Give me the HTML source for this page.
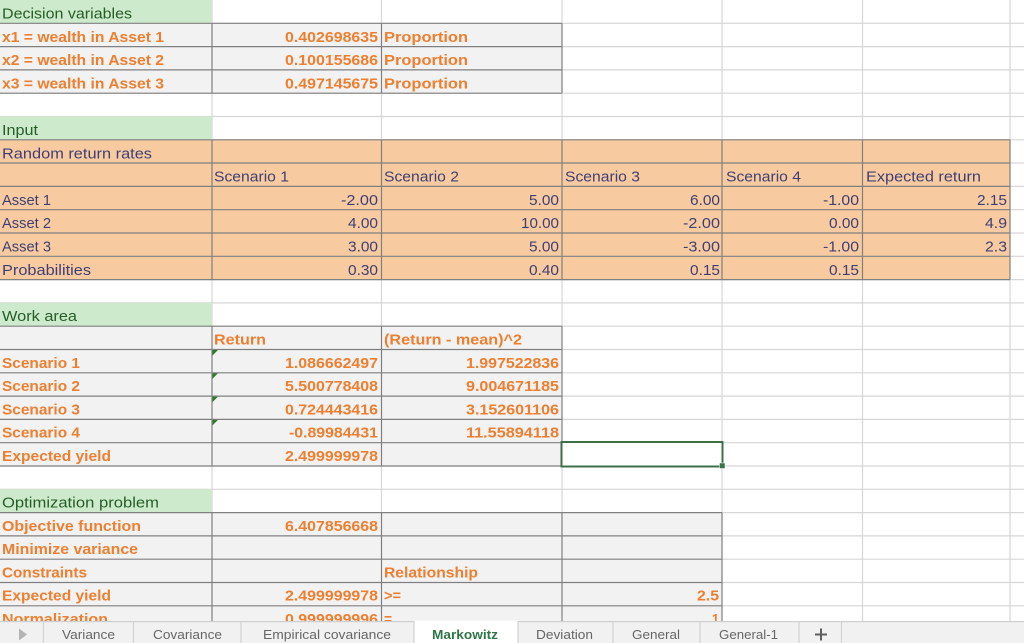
<!DOCTYPE html>
<html><head><meta charset="utf-8"><style>
html,body{margin:0;padding:0;background:#fff;width:1024px;height:643px;overflow:hidden}
svg{display:block;position:absolute;left:0;top:0}
text{font-family:"Liberation Sans",sans-serif;font-size:15px}
.g text{fill:#255e26}
.b text{fill:#3f3f76}
.o text{fill:#ee7f30;font-weight:bold}
.e{text-anchor:end}
.t text{font-size:13px;fill:#666}
</style></head><body>
<svg width="1024" height="643" viewBox="0 0 1024 643" xmlns="http://www.w3.org/2000/svg">
<!-- fills -->
<rect x="0" y="0" width="1024" height="643" fill="#fff"/>
<g stroke="#d6d6d6" stroke-width="1.2" fill="none">
<path d="M212 0V621M381.5 0V621M562 0V621M722 0V621M862.5 0V621M1010 0V621"/>
<path d="M0 23.3H1024M0 46.6H1024M0 69.9H1024M0 93.2H1024M0 116.5H1024M0 139.8H1024M0 163H1024M0 186.4H1024M0 209.7H1024M0 233H1024M0 256.3H1024M0 279.6H1024M0 302.9H1024M0 326.2H1024M0 349.5H1024M0 372.8H1024M0 396.1H1024M0 419.4H1024M0 442.7H1024M0 466H1024M0 489.3H1024M0 512.6H1024M0 535.9H1024M0 559.2H1024M0 582.5H1024M0 605.8H1024"/>
</g>
<rect x="0" y="0" width="212" height="23.3" fill="#cdeacd"/>
<rect x="0" y="116.5" width="212" height="23.3" fill="#cdeacd"/>
<rect x="0" y="302.9" width="212" height="23.3" fill="#cdeacd"/>
<rect x="0" y="489.3" width="212" height="23.3" fill="#cdeacd"/>
<rect x="0" y="23.3" width="562" height="69.9" fill="#f2f2f2"/>
<rect x="0" y="139.8" width="1010" height="139.8" fill="#f7cb9f"/>
<rect x="0" y="326.2" width="562" height="139.8" fill="#f2f2f2"/>
<rect x="0" y="512.6" width="722" height="110" fill="#f2f2f2"/>
<!-- borders -->
<g stroke="#808080" stroke-width="1.2" fill="none">
<path d="M0 23.3H562M0 46.6H562M0 69.9H562M0 93.2H562M212 23.3V93.2M381.5 23.3V93.2M562 23.3V93.2"/>
<path d="M0 139.8H1010M0 163H1010M0 186.4H1010M0 209.7H1010M0 233H1010M0 256.3H1010M0 279.6H1010M212 139.8V279.6M381.5 139.8V279.6M562 139.8V279.6M722 139.8V279.6M862.5 139.8V279.6M1010 139.8V279.6"/>
<path d="M0 326.2H562M0 349.5H562M0 372.8H562M0 396.1H562M0 419.4H562M0 442.7H562M0 466H562M212 326.2V466M381.5 326.2V466M562 326.2V442"/>
<path d="M0 512.6H722M0 535.9H722M0 559.2H722M0 582.5H722M0 605.8H722M212 512.6V622M381.5 512.6V622M562 512.6V622M722 512.6V622"/>
</g>
<!-- green section labels -->
<g class="g">
<text x="2" y="18.6" textLength="130" lengthAdjust="spacingAndGlyphs">Decision variables</text>
<text x="2" y="135" textLength="36" lengthAdjust="spacingAndGlyphs">Input</text>
<text x="2" y="321.2" textLength="75" lengthAdjust="spacingAndGlyphs">Work area</text>
<text x="2" y="507.5" textLength="157" lengthAdjust="spacingAndGlyphs">Optimization problem</text>
</g>
<!-- orange bold -->
<g class="o">
<text x="2" y="41.9" textLength="162" lengthAdjust="spacingAndGlyphs">x1 = wealth in Asset 1</text>
<text x="2" y="65.2" textLength="162" lengthAdjust="spacingAndGlyphs">x2 = wealth in Asset 2</text>
<text x="2" y="88.5" textLength="162" lengthAdjust="spacingAndGlyphs">x3 = wealth in Asset 3</text>
<text x="285" y="41.9" textLength="93" lengthAdjust="spacingAndGlyphs">0.402698635</text>
<text x="285" y="65.2" textLength="93" lengthAdjust="spacingAndGlyphs">0.100155686</text>
<text x="285" y="88.5" textLength="93" lengthAdjust="spacingAndGlyphs">0.497145675</text>
<text x="384" y="41.9" textLength="84" lengthAdjust="spacingAndGlyphs">Proportion</text>
<text x="384" y="65.2" textLength="84" lengthAdjust="spacingAndGlyphs">Proportion</text>
<text x="384" y="88.5" textLength="84" lengthAdjust="spacingAndGlyphs">Proportion</text>
<text x="214" y="344.5" textLength="52" lengthAdjust="spacingAndGlyphs">Return</text>
<text x="384" y="344.5" textLength="138" lengthAdjust="spacingAndGlyphs">(Return - mean)^2</text>
<text x="2" y="367.8" textLength="78" lengthAdjust="spacingAndGlyphs">Scenario 1</text>
<text x="2" y="391.1" textLength="78" lengthAdjust="spacingAndGlyphs">Scenario 2</text>
<text x="2" y="414.4" textLength="78" lengthAdjust="spacingAndGlyphs">Scenario 3</text>
<text x="2" y="437.7" textLength="78" lengthAdjust="spacingAndGlyphs">Scenario 4</text>
<text x="2" y="461" textLength="109" lengthAdjust="spacingAndGlyphs">Expected yield</text>
<text x="285" y="367.8" textLength="93" lengthAdjust="spacingAndGlyphs">1.086662497</text>
<text x="285" y="391.1" textLength="93" lengthAdjust="spacingAndGlyphs">5.500778408</text>
<text x="285" y="414.4" textLength="93" lengthAdjust="spacingAndGlyphs">0.724443416</text>
<text x="289" y="437.7" textLength="89" lengthAdjust="spacingAndGlyphs">-0.89984431</text>
<text x="285" y="461" textLength="93" lengthAdjust="spacingAndGlyphs">2.499999978</text>
<text x="466" y="367.8" textLength="93" lengthAdjust="spacingAndGlyphs">1.997522836</text>
<text x="466" y="391.1" textLength="93" lengthAdjust="spacingAndGlyphs">9.004671185</text>
<text x="466" y="414.4" textLength="93" lengthAdjust="spacingAndGlyphs">3.152601106</text>
<text x="466" y="437.7" textLength="93" lengthAdjust="spacingAndGlyphs">11.55894118</text>
<text x="2" y="530.8" textLength="139" lengthAdjust="spacingAndGlyphs">Objective function</text>
<text x="2" y="554.1" textLength="136" lengthAdjust="spacingAndGlyphs">Minimize variance</text>
<text x="2" y="577.4" textLength="85" lengthAdjust="spacingAndGlyphs">Constraints</text>
<text x="2" y="600.7" textLength="109" lengthAdjust="spacingAndGlyphs">Expected yield</text>
<text x="2" y="624" textLength="106" lengthAdjust="spacingAndGlyphs">Normalization</text>
<text x="285" y="530.8" textLength="93" lengthAdjust="spacingAndGlyphs">6.407856668</text>
<text x="384" y="577.4" textLength="94" lengthAdjust="spacingAndGlyphs">Relationship</text>
<text x="285" y="600.7" textLength="93" lengthAdjust="spacingAndGlyphs">2.499999978</text>
<text x="285" y="624" textLength="93" lengthAdjust="spacingAndGlyphs">0.999999996</text>
<text x="384" y="600.7" textLength="17" lengthAdjust="spacingAndGlyphs">&gt;=</text>
<text x="384" y="624" textLength="8" lengthAdjust="spacingAndGlyphs">=</text>
<text x="697" y="600.7" textLength="22" lengthAdjust="spacingAndGlyphs">2.5</text>
<text x="712" y="624" textLength="7" lengthAdjust="spacingAndGlyphs">1</text>
</g>
<!-- blue input -->
<g class="b">
<text x="2" y="158.3" textLength="150" lengthAdjust="spacingAndGlyphs">Random return rates</text>
<text x="214" y="181.6" textLength="75" lengthAdjust="spacingAndGlyphs">Scenario 1</text>
<text x="384" y="181.6" textLength="75" lengthAdjust="spacingAndGlyphs">Scenario 2</text>
<text x="565" y="181.6" textLength="75" lengthAdjust="spacingAndGlyphs">Scenario 3</text>
<text x="726" y="181.6" textLength="75" lengthAdjust="spacingAndGlyphs">Scenario 4</text>
<text x="866" y="181.6" textLength="115" lengthAdjust="spacingAndGlyphs">Expected return</text>
<text x="2" y="204.9" textLength="49" lengthAdjust="spacingAndGlyphs">Asset 1</text>
<text x="2" y="228.2" textLength="49" lengthAdjust="spacingAndGlyphs">Asset 2</text>
<text x="2" y="251.5" textLength="49" lengthAdjust="spacingAndGlyphs">Asset 3</text>
<text x="2" y="274.8" textLength="89" lengthAdjust="spacingAndGlyphs">Probabilities</text>
<text x="341" y="204.9" textLength="37" lengthAdjust="spacingAndGlyphs">-2.00</text>
<text x="348" y="228.2" textLength="30" lengthAdjust="spacingAndGlyphs">4.00</text>
<text x="348" y="251.5" textLength="30" lengthAdjust="spacingAndGlyphs">3.00</text>
<text x="348" y="274.8" textLength="30" lengthAdjust="spacingAndGlyphs">0.30</text>
<text x="529" y="204.9" textLength="30" lengthAdjust="spacingAndGlyphs">5.00</text>
<text x="521" y="228.2" textLength="38" lengthAdjust="spacingAndGlyphs">10.00</text>
<text x="529" y="251.5" textLength="30" lengthAdjust="spacingAndGlyphs">5.00</text>
<text x="529" y="274.8" textLength="30" lengthAdjust="spacingAndGlyphs">0.40</text>
<text x="690" y="204.9" textLength="30" lengthAdjust="spacingAndGlyphs">6.00</text>
<text x="683" y="228.2" textLength="37" lengthAdjust="spacingAndGlyphs">-2.00</text>
<text x="683" y="251.5" textLength="37" lengthAdjust="spacingAndGlyphs">-3.00</text>
<text x="690" y="274.8" textLength="30" lengthAdjust="spacingAndGlyphs">0.15</text>
<text x="823" y="204.9" textLength="36" lengthAdjust="spacingAndGlyphs">-1.00</text>
<text x="829" y="228.2" textLength="30" lengthAdjust="spacingAndGlyphs">0.00</text>
<text x="823" y="251.5" textLength="36" lengthAdjust="spacingAndGlyphs">-1.00</text>
<text x="829" y="274.8" textLength="30" lengthAdjust="spacingAndGlyphs">0.15</text>
<text x="977" y="204.9" textLength="30" lengthAdjust="spacingAndGlyphs">2.15</text>
<text x="985" y="228.2" textLength="22" lengthAdjust="spacingAndGlyphs">4.9</text>
<text x="985" y="251.5" textLength="22" lengthAdjust="spacingAndGlyphs">2.3</text>
</g>
<!-- error triangles -->
<g fill="#2f7a2f">
<path d="M212.5 350H218L212.5 355.5Z"/>
<path d="M212.5 373.3H218L212.5 378.8Z"/>
<path d="M212.5 396.6H218L212.5 402.1Z"/>
<path d="M212.5 419.9H218L212.5 425.4Z"/>
</g>
<!-- selection -->
<rect x="562" y="442.5" width="160" height="24" fill="#fff"/>
<rect x="561.5" y="442" width="161" height="24.5" fill="none" stroke="#3c7049" stroke-width="2"/>
<rect x="719.5" y="463" width="5.5" height="5.5" fill="#3c7049" stroke="#fff" stroke-width="0.5"/>
<!-- tab bar -->
<rect x="0" y="621" width="1024" height="22" fill="#f1f1f1"/>
<rect x="0" y="621" width="1024" height="1.2" fill="#cfcfcf"/>
<rect x="414" y="620.5" width="104" height="22.5" fill="#fff"/>
<g stroke="#d2d2d2" stroke-width="1.2">
<path d="M43.5 621V643M133.5 621V643M241 621V643M414 621V643M518 621V643M613 621V643M700 621V643M799 621V643M841.5 621V643"/>
</g>
<path d="M19 628.5L27 634.5L19 640.5Z" fill="#b4b4b4"/>
<g class="t">
<text x="62" y="639" textLength="53" lengthAdjust="spacingAndGlyphs">Variance</text>
<text x="153" y="639" textLength="69" lengthAdjust="spacingAndGlyphs">Covariance</text>
<text x="263" y="639" textLength="128" lengthAdjust="spacingAndGlyphs">Empirical covariance</text>
<text x="536" y="639" textLength="57" lengthAdjust="spacingAndGlyphs">Deviation</text>
<text x="632" y="639" textLength="48" lengthAdjust="spacingAndGlyphs">General</text>
<text x="719" y="639" textLength="59" lengthAdjust="spacingAndGlyphs">General-1</text>
<text x="432" y="639" textLength="66" lengthAdjust="spacingAndGlyphs" style="fill:#2f7548;font-weight:bold">Markowitz</text>
</g>
<path d="M815 634.5H827M821 628.5V640.5" stroke="#5f5f5f" stroke-width="2" fill="none"/>
</svg>
</body></html>
